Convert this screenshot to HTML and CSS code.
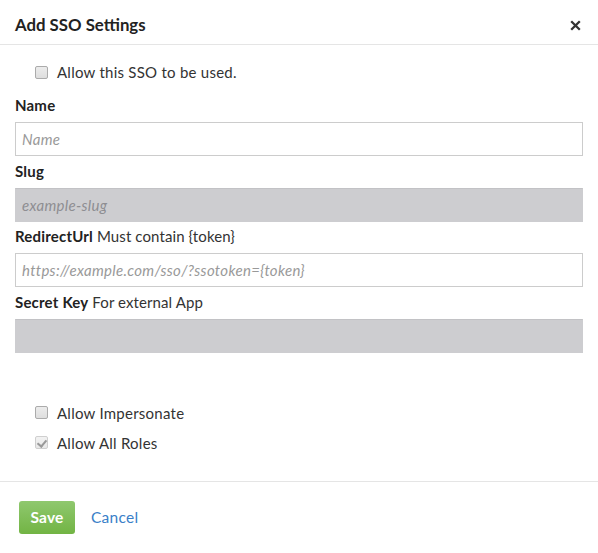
FILE: index.html
```html
<!DOCTYPE html>
<html>
<head>
<meta charset="utf-8">
<link rel="stylesheet" href="styles.css">
</head>
<body>
<div class="modal">
  <div class="modal-header">
    <h4 class="modal-title">Add SSO Settings</h4>
    <button class="close" type="button" aria-label="Close">
      <svg width="11" height="11" viewBox="0 0 11 11"><path d="M1.2 1.2 L9.8 9.8 M9.8 1.2 L1.2 9.8" stroke="#333" stroke-width="2.3" stroke-linecap="butt" fill="none"/></svg>
    </button>
  </div>
  <div class="modal-body">
    <label class="check first"><input type="checkbox" class="cb"><span>Allow this SSO to be used.</span></label>

    <div class="field">
      <div class="label"><b>Name</b></div>
      <input class="input" type="text" placeholder="Name">
    </div>
    <div class="field">
      <div class="label"><b>Slug</b></div>
      <input class="input readonly" type="text" placeholder="example-slug" readonly>
    </div>
    <div class="field">
      <div class="label"><b>RedirectUrl</b> Must contain {token}</div>
      <input class="input" type="text" placeholder="https://example.com/sso/?ssotoken={token}">
    </div>
    <div class="field">
      <div class="label"><b>Secret Key</b> For external App</div>
      <input class="input readonly" type="text" readonly>
    </div>

    <div class="checks">
      <label class="check"><input type="checkbox" class="cb"><span>Allow Impersonate</span></label>
      <label class="check"><input type="checkbox" class="cb" checked disabled><span>Allow All Roles</span></label>
    </div>
  </div>
  <div class="modal-footer">
    <button class="btn-save" type="button">Save</button>
    <a class="cancel" href="#">Cancel</a>
  </div>
</div>
</body>
</html>
```

FILE: styles.css
```css
html, body {
  margin: 0;
  padding: 0;
  background: #fff;
}
body {
  font-family: Lato, "Open Sans", "Liberation Sans", sans-serif;
  font-size: 15px;
  letter-spacing: 0.25px;
  line-height: 20px;
  color: #333;
}
.modal {
  width: 598px;
}
.modal-header {
  display: flex;
  align-items: flex-start;
  justify-content: space-between;
  padding: 15px 17px 9px 15px;
  border-bottom: 1px solid #e5e5e5;
}
.modal-title {
  margin: 0;
  font-size: 16.8px;
  letter-spacing: 0;
  line-height: 20px;
  font-weight: 700;
  color: #222;
}
.close {
  border: 0;
  background: none;
  padding: 0;
  margin-top: 5px;
  width: 11px;
  height: 11px;
  display: block;
  cursor: pointer;
}
.close svg { display: block; }
.modal-body {
  padding: 17px 15px 28px 15px;
}
.check {
  display: flex;
  align-items: center;
  height: 20px;
  padding-left: 20px;
  color: #333;
}
.check span { margin-left: 9px; }
.check.first { margin-bottom: 12px; }
.cb {
  -webkit-appearance: none;
  appearance: none;
  margin: 0;
  width: 13px;
  height: 13px;
  border: 1px solid #ababab;
  border-radius: 2px;
  background: linear-gradient(#ececec, #dedede);
  box-sizing: border-box;
  position: relative;
  flex: none;
}
.cb:checked::after {
  content: "";
  position: absolute;
  left: 3px;
  top: 1px;
  width: 4px;
  height: 7px;
  border: solid #999;
  border-width: 0 2px 2px 0;
  transform: rotate(40deg);
}
.cb:disabled {
  border-color: #cfcfcf;
  background: linear-gradient(#f2f2f2, #e8e8e8);
}
.field {
  margin-top: 3.6px;
}
.label {
  line-height: 20px;
  padding-top: 1px;
  margin-bottom: 7px;
  color: #333;
  letter-spacing: 0.1px;
}
.label b {
  font-weight: 700;
  color: #222;
  letter-spacing: 0.2px;
}
.input {
  display: block;
  box-sizing: border-box;
  width: 100%;
  height: 34px;
  margin: 0;
  padding: 6px 6px;
  border: 1px solid #ccc;
  border-radius: 0;
  background: #fff;
  font-family: Lato, "Open Sans", "Liberation Sans", sans-serif;
  font-size: 15px;
  letter-spacing: 0.3px;
  color: #333;
  outline: none;
}
.input::placeholder {
  color: #999;
  font-style: italic;
}
.input.readonly {
  background: #cdcdd0;
  border-color: #cdcdd0;
  border-top-color: #c2c2c5;
}
.input.readonly::placeholder {
  color: #8e8e92;
}
.checks {
  margin-top: 50px;
  display: flex;
  flex-direction: column;
  gap: 10px;
}
.modal-footer {
  border-top: 1px solid #e5e5e5;
  padding: 19px 15px 19px 19px;
  display: flex;
  align-items: center;
}
.btn-save {
  width: 56px;
  height: 33px;
  border: 0;
  border-radius: 3px;
  background: linear-gradient(#8fc86e, #72b444);
  color: #fff;
  font-family: Lato, "Open Sans", "Liberation Sans", sans-serif;
  font-size: 15.5px;
  letter-spacing: 0.2px;
  font-weight: 700;
  padding: 0;
  cursor: pointer;
}
.cancel {
  margin-left: 16px;
  color: #3a7fc8;
  text-decoration: none;
  font-size: 15.5px;
}
```
